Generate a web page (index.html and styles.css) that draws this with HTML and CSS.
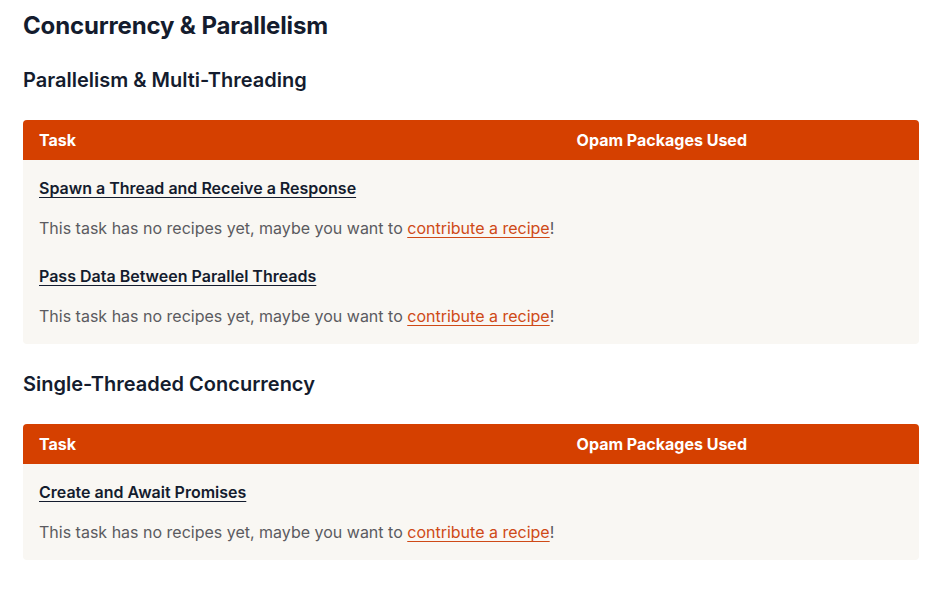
FILE: index.html
```html
<!DOCTYPE html>
<html lang="en">
<head>
<meta charset="utf-8">
<title>Concurrency &amp; Parallelism</title>
<link rel="stylesheet" href="styles.css">
</head>
<body>
<main class="page">
  <h1 class="title">Concurrency &amp; Parallelism</h1>

  <h2 class="subtitle">Parallelism &amp; Multi-Threading</h2>
  <section class="table">
    <div class="table-head">
      <div class="col-task">Task</div>
      <div class="col-pkg">Opam Packages Used</div>
    </div>
    <div class="table-body">
      <div class="task">
        <a class="task-link" href="#">Spawn a Thread and Receive a Response</a>
        <p class="task-note">This task has no recipes yet, maybe you want to <a class="contrib" href="#">contribute a recipe</a>!</p>
      </div>
      <div class="task">
        <a class="task-link" href="#">Pass Data Between Parallel Threads</a>
        <p class="task-note">This task has no recipes yet, maybe you want to <a class="contrib" href="#">contribute a recipe</a>!</p>
      </div>
    </div>
  </section>

  <h2 class="subtitle">Single-Threaded Concurrency</h2>
  <section class="table">
    <div class="table-head">
      <div class="col-task">Task</div>
      <div class="col-pkg">Opam Packages Used</div>
    </div>
    <div class="table-body">
      <div class="task">
        <a class="task-link" href="#">Create and Await Promises</a>
        <p class="task-note">This task has no recipes yet, maybe you want to <a class="contrib" href="#">contribute a recipe</a>!</p>
      </div>
    </div>
  </section>
</main>
</body>
</html>
```
FILE: styles.css
```css
* { box-sizing: border-box; }
html, body { margin: 0; padding: 0; background: #ffffff; }
body {
  font-family: "Inter", "Noto Sans", sans-serif;
  color: #1e2433;
}
.page {
  padding: 10px 21px 0 23px;
  display: flex;
  flex-direction: column;
}
.title {
  margin: 0;
  font-size: 24px;
  line-height: 32px;
  font-weight: 700;
  letter-spacing: -0.15px;
  color: #141c2e;
}
.subtitle {
  margin: 26px 0 0;
  font-size: 20px;
  line-height: 28px;
  font-weight: 600;
  color: #141c2e;
}
.title + .subtitle { margin-top: 24px; }
.table {
  margin-top: 26px;
  border-radius: 4px;
  overflow: hidden;
  background: #f9f7f3;
}
.table-head {
  display: grid;
  grid-template-columns: 60% 40%;
  background: #d54000;
  color: #ffffff;
  font-weight: 700;
  font-size: 16px;
  line-height: 24px;
}
.table-head > div { padding: 8px 16px; }
.table-body {
  display: flex;
  flex-direction: column;
  gap: 24px;
  padding: 16px 16px;
}
.task {
  display: flex;
  flex-direction: column;
  align-items: flex-start;
  gap: 16px;
}
.task-link {
  font-size: 16px;
  line-height: 24px;
  font-weight: 600;
  color: #141c2e;
  text-decoration: underline;
  text-underline-offset: 3px;
  text-decoration-thickness: 1px;
}
.task-note {
  margin: 0;
  font-size: 16px;
  line-height: 24px;
  color: #5b5b60;
}
.contrib {
  color: #cf4a17;
  text-decoration: underline;
  text-underline-offset: 3px;
  text-decoration-thickness: 1px;
}
```
